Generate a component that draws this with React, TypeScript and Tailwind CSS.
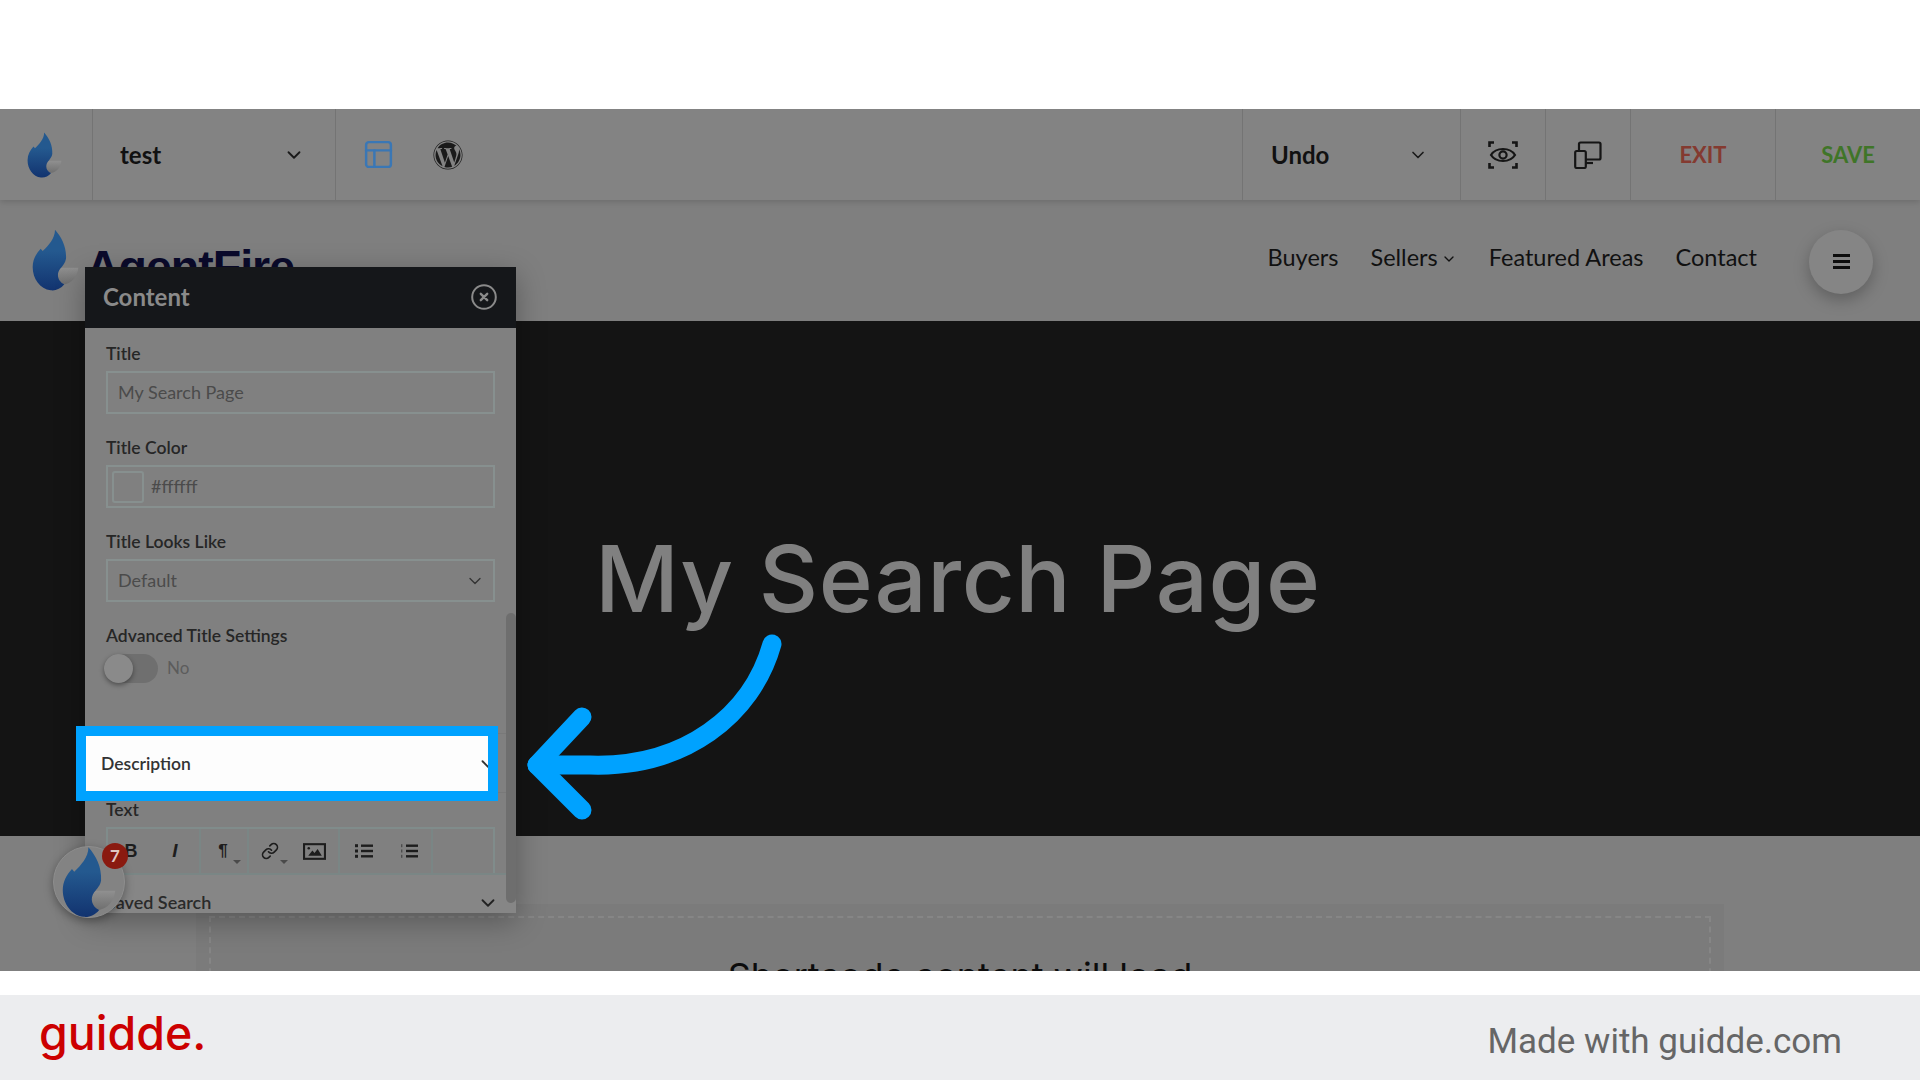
import { ChevronDown, Link, PanelsTopLeft } from "lucide-react"
import { FaWordpress } from "react-icons/fa"

const ui = "font-['Lato','Noto_Sans',sans-serif]"

function Flame({ id, className }: { id: string; className?: string }) {
  return (
    <svg viewBox="36 26 141 186" className={className}>
      <defs>
        <linearGradient id={id} x1="0" y1="0" x2="0" y2="1">
          <stop offset="0.35" stopColor="#24598f" />
          <stop offset="1" stopColor="#12336f" />
        </linearGradient>
        <linearGradient id={id + "g"} x1="0" y1="0" x2="0" y2="1">
          <stop offset="0" stopColor="#909090" />
          <stop offset="1" stopColor="#6f6f6f" />
        </linearGradient>
      </defs>
      <path d="M118 142 H175 C172 170 155 188 133 192 C112 182 106 160 118 142 Z" fill={`url(#${id}g)`} />
      <path
        d="M105 28 C125 50 140 80 138 115 C136 128 128 136 120 146 C108 162 114 184 133 192 C122 206 106 212 92 210 C60 206 38 175 38 140 C38 118 48 100 62 85 L68 92 C85 75 105 55 105 28 Z"
        fill={`url(#${id})`}
      />
    </svg>
  )
}

function Field({ label, children }: { label: string; children: React.ReactNode }) {
  return (
    <div className="mb-[21px]">
      <div className="h-[24px] text-[17.5px] leading-[26px] font-semibold text-[#262626]">{label}</div>
      <div className="mt-[6px] flex h-[43px] items-center border-2 border-[#87908f] text-[18px] text-[#4b4b4b]">
        {children}
      </div>
    </div>
  )
}

function ImageIcon() {
  return (
    <svg viewBox="0 0 22 16" className="h-[17px] w-[23px]">
      <rect x="1" y="1" width="20" height="14" fill="none" stroke="#1d1d1d" strokeWidth="2" />
      <path d="M5 12 L9 7 L11 9.5 L14 5.5 L18 12 Z" fill="#1d1d1d" />
      <circle cx="5.5" cy="5" r="1.2" fill="#1d1d1d" />
    </svg>
  )
}

function BulletIcon({ ordered }: { ordered?: boolean }) {
  const marker = ordered ? "#4c4c4c" : "#1d1d1d"
  const size = ordered ? 1.4 : 3
  return (
    <svg viewBox="0 0 18 14" className="h-[14px] w-[18px]" fill="#1d1d1d">
      <rect x="6" y="0.5" width="12" height="2.4" />
      <rect x="6" y="5.8" width="12" height="2.4" />
      <rect x="6" y="11.1" width="12" height="2.4" />
      <rect x={ordered ? 1 : 0} y="0.2" width={size} height="3" fill={marker} />
      <rect x={ordered ? 1 : 0} y="5.5" width={size} height="3" fill={marker} />
      <rect x={ordered ? 1 : 0} y="10.8" width={size} height="3" fill={marker} />
    </svg>
  )
}

function ContentPanel() {
  return (
    <div className={`absolute left-[85px] top-[158px] flex h-[646px] w-[431px] flex-col overflow-hidden bg-[#808080] shadow-[0_8px_28px_rgba(0,0,0,0.3)] ${ui}`}>
      <div className="flex h-[61px] shrink-0 items-center justify-between bg-[#15171a] pb-[2px] pl-[18px] pr-[19px]">
        <span className="text-[24px] font-bold text-[#8a8a8a]">Content</span>
        <svg viewBox="0 0 26 26" className="h-[26px] w-[26px]">
          <circle cx="13" cy="13" r="11.8" fill="none" stroke="#8a8a8a" strokeWidth="2" />
          <path d="M9.8 9.8 L16.2 16.2 M16.2 9.8 L9.8 16.2" stroke="#8a8a8a" strokeWidth="2.4" strokeLinecap="round" />
        </svg>
      </div>

      <div className="pl-[21px] pr-[21px] pt-[13px]">
        <Field label="Title">
          <span className="pl-[10px]">My Search Page</span>
        </Field>
        <Field label="Title Color">
          <span className="ml-[4px] h-[32px] w-[32px] rounded-[3px] border-2 border-[#87908f]" />
          <span className="ml-[7px]">#ffffff</span>
        </Field>
        <Field label="Title Looks Like">
          <span className="flex-1 pl-[10px]">Default</span>
          <ChevronDown className="mr-[8px] h-[20px] w-[20px] text-[#333333]" strokeWidth={1.6} />
        </Field>
        <div className="h-[24px] text-[17.5px] leading-[26px] font-semibold text-[#262626]">Advanced Title Settings</div>
        <div className="mt-[7px] flex h-[29px] items-center">
          <div className="relative ml-[-2px] h-[29px] w-[54px] rounded-full bg-[#6f6f6f]">
            <div className="absolute left-0 top-0 h-[29px] w-[29px] rounded-full bg-[#8a8a8a] shadow-[0_2px_5px_rgba(0,0,0,0.4)]" />
          </div>
          <span className="ml-[9px] mt-[-2px] text-[17px] text-[#5c5c5c]">No</span>
        </div>
      </div>

      <div className="mt-[50px] h-[60px] shrink-0 border-y border-[#797979]" />

      <div className="pl-[21px] pr-[21px]">
        <div className="mt-[4px] h-[24px] text-[17.5px] leading-[26px] font-semibold text-[#262626]">Text</div>
        <div className="mt-[6px] flex h-[46px] overflow-hidden border-2 border-b-0 border-[#808c8b] text-[#1d1d1d]">
          <div className="flex w-[91px]">
            <div className="flex h-[44px] w-[46px] items-center justify-center font-['Liberation_Sans',sans-serif] text-[18px] font-bold">B</div>
            <div className="flex h-[44px] w-[42px] items-center justify-center font-['Liberation_Sans',sans-serif] text-[19px] font-bold italic">I</div>
          </div>
          <div className="relative flex h-[44px] w-[48px] items-center justify-center border-l-2 border-[#7a8685] pr-[2px] font-['Liberation_Sans',sans-serif] text-[17px] font-bold">
            ¶
            <span className="absolute left-[32px] top-[31px] h-0 w-0 border-x-[4px] border-t-[4px] border-x-transparent border-t-[#4a4a4a]" />
          </div>
          <div className="relative flex w-[91px] border-l-2 border-[#7a8685]">
            <div className="flex h-[44px] w-[42px] items-center justify-center">
              <Link className="h-[18px] w-[18px]" strokeWidth={2.2} />
            </div>
            <span className="absolute left-[31px] top-[31px] h-0 w-0 border-x-[4px] border-t-[4px] border-x-transparent border-t-[#4a4a4a]" />
            <div className="flex h-[44px] w-[49px] items-center justify-center">
              <ImageIcon />
            </div>
          </div>
          <div className="flex w-[93px] border-l-2 border-[#7a8685]">
            <div className="flex h-[44px] w-[47px] items-center justify-center">
              <BulletIcon />
            </div>
            <div className="flex h-[44px] w-[44px] items-center justify-center">
              <BulletIcon ordered />
            </div>
          </div>
          <div className="flex-1 border-l-2 border-[#7a8685]" />
        </div>
      </div>

      <div className="relative h-[60px] shrink-0 border-t-2 border-[#7a8685] bg-[#868686]">
        <span className="absolute left-[21px] top-[14px] text-[18px] font-semibold text-[#2a2a2a]">Saved Search</span>
        <ChevronDown className="absolute left-[392px] top-[17px] h-[22px] w-[22px] text-[#222222]" strokeWidth={2} />
      </div>

      <div className="absolute left-[421px] top-[346px] h-[290px] w-[10px] rounded-full bg-[#6e6e6e]" />
    </div>
  )
}

export default function App() {
  return (
    <div className="flex h-screen w-full flex-col overflow-hidden bg-white">
      <div className="h-[109px] shrink-0" />

      <div className="relative h-[862px] shrink-0 overflow-hidden bg-[#7f7f7f]">
        <div className={`relative z-10 flex h-[91px] items-stretch bg-[#838383] shadow-[0_2px_6px_rgba(0,0,0,0.15)] ${ui}`}>
          <div className="flex w-[93px] items-center justify-center border-r border-[#747474] pr-[3px]">
            <Flame id="fa" className="h-[46px] w-[35px]" />
          </div>
          <div className="flex w-[243px] items-center justify-between border-r border-[#747474] pl-[27px] pr-[30px]">
            <span className="text-[24px] font-bold text-[#111111]">test</span>
            <ChevronDown className="h-[22px] w-[22px] text-[#1a1a1a]" strokeWidth={2} />
          </div>
          <div className="flex flex-1 items-center pl-[26px]">
            <PanelsTopLeft className="h-[33px] w-[33px] text-[#3a77b5]" strokeWidth={1.8} />
            <FaWordpress className="ml-[38px] h-[30px] w-[30px] text-[#1a1a1a]" />
          </div>
          <div className="flex w-[218px] items-center justify-between border-l border-[#747474] pl-[28px] pr-[32px]">
            <span className="text-[24px] font-bold text-[#111111]">Undo</span>
            <ChevronDown className="h-[20px] w-[20px] text-[#1a1a1a]" strokeWidth={2} />
          </div>
          <div className="flex w-[85px] items-center justify-center border-l border-[#747474]">
            <svg viewBox="0 0 30 28" className="h-[28px] w-[30px]" fill="none" stroke="#151515">
              <path d="M1.5 6 V1.5 H6 M24 1.5 H28.5 V6 M1.5 22 V26.5 H6 M24 26.5 H28.5 V22" strokeWidth="2.6" />
              <path d="M3 14 C8 6 22 6 27 14 C22 22 8 22 3 14 Z" strokeWidth="2.2" />
              <circle cx="15" cy="14" r="3.6" strokeWidth="2.2" />
            </svg>
          </div>
          <div className="flex w-[85px] items-center justify-center border-l border-[#747474]">
            <svg viewBox="0 0 28 28" className="h-[28px] w-[28px]" fill="none" stroke="#151515" strokeWidth="2.2">
              <path d="M5 9 V3 Q5 1.5 6.5 1.5 H25 Q26.5 1.5 26.5 3 V17 Q26.5 18.5 25 18.5 H12" />
              <rect x="1.2" y="10" width="10.6" height="17" rx="1.6" />
              <path d="M12 22 H19" />
            </svg>
          </div>
          <div className="flex w-[145px] items-center justify-center border-l border-[#747474] text-[22px] font-bold text-[#843a30]">EXIT</div>
          <div className="flex w-[145px] items-center justify-center border-l border-[#747474] text-[22px] font-bold text-[#3f7528]">SAVE</div>
        </div>

        <div className={`flex h-[121px] items-center bg-[#7f7f7f] ${ui}`}>
          <div className="ml-[32px] flex h-full items-start pt-[29px]">
            <Flame id="fb" className="h-[62px] w-[47px]" />
            <span className="ml-[7px] mt-[8px] font-['Liberation_Sans',sans-serif] text-[46.5px] leading-[60px] font-bold tracking-[-1px] text-[#0a0a2b]">AgentFire</span>
          </div>
          <nav className="ml-auto mb-[6px] flex items-center text-[23.5px] text-[#111111]">
            <span className="mr-[32px]">Buyers</span>
            <span className="mr-[32px] flex items-center">
              Sellers
              <ChevronDown className="ml-[3px] mt-[2px] h-[16px] w-[16px]" strokeWidth={2} />
            </span>
            <span className="mr-[32px]">Featured Areas</span>
            <span>Contact</span>
          </nav>
          <div className="ml-[52px] mr-[47px] mt-[2px] flex h-[64px] w-[64px] items-center justify-center rounded-full bg-[#858585] shadow-[0_6px_16px_rgba(0,0,0,0.25)]">
            <div className="flex w-[17px] flex-col gap-[3px]">
              <span className="h-[3px] bg-[#0d0d0d]" />
              <span className="h-[3px] bg-[#0d0d0d]" />
              <span className="h-[3px] bg-[#0d0d0d]" />
            </div>
          </div>
        </div>

        <div className="flex h-[515px] items-center bg-[#141414] pl-[595px]">
          <span className="font-['Inter',sans-serif] text-[92px] leading-none font-medium tracking-[0.6px] text-[#808080]">My Search Page</span>
        </div>

        <div className="mx-[196px] mt-[68px] h-[100px] bg-[#7b7b7b] px-[13px] pt-[12px]">
          <div className="h-[100px] border-2 border-dashed border-[#868686] pt-[38px] text-center font-['Inter',sans-serif] text-[36px] leading-[40px] text-[#0c0c0c]">
            Shortcode content will load
          </div>
        </div>

        <ContentPanel />

        <div className="absolute left-[76px] top-[617px] flex h-[75px] w-[422px] items-center justify-between overflow-hidden border-[10px] border-[#00a2ff] bg-[#fdfdfd] pl-[15px] font-['Lato',sans-serif] text-[17.5px] leading-[28px] font-semibold text-[#333333]">
          <span className="mt-[1px]">Description</span>
          <ChevronDown className="mr-[-11px] h-[22px] w-[22px] shrink-0 text-[#333333]" strokeWidth={2} />
        </div>

        <svg className="absolute left-[520px] top-[521px] h-[190px] w-[270px]" viewBox="0 0 270 190" fill="none" stroke="#00a2ff" strokeWidth="19" strokeLinecap="round" strokeLinejoin="round">
          <path d="M252 14 C232 85 165 138 70 135 L17 135" />
          <path d="M62 87 L17 135 L62 180" />
        </svg>

        <div className="absolute left-[53px] top-[737px] flex h-[72px] w-[72px] items-center justify-center rounded-full border border-[#8e8e8e] bg-[#838383] shadow-[0_3px_10px_rgba(0,0,0,0.35)]">
          <Flame id="fc" className="h-[72px] w-[54px]" />
        </div>
        <div className={`absolute left-[102px] top-[734px] flex h-[26px] w-[26px] items-center justify-center rounded-full bg-[#8a1a10] text-[17px] font-bold text-[#e0c8c4] ${ui}`}>7</div>
      </div>

      <div className="h-[24px] shrink-0" />

      <div className="flex h-[85px] shrink-0 items-center justify-between bg-[#ecedef] pl-[39px] pr-[78px]">
        <span className="mt-[-9px] font-['Inter',sans-serif] text-[46.5px] leading-none font-medium text-[#cc0000]">guidde.</span>
        <span className="mt-[9px] font-['Roboto',sans-serif] text-[35px] text-[#666666]">Made with guidde.com</span>
      </div>
    </div>
  )
}
